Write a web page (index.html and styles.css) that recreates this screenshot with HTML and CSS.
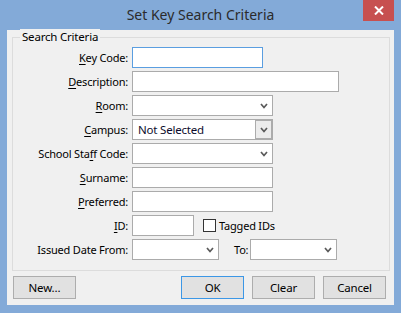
FILE: index.html
```html
<!DOCTYPE html>
<html>
<head>
<meta charset="utf-8">
<link rel="stylesheet" href="styles.css">
</head>
<body>
<div class="window">
  <div class="titlebar">
    <div class="title">Set Key Search Criteria</div>
    <div class="close"><svg width="10" height="9" viewBox="0 0 10 9"><path d="M1 0.5 L9 8.5 M9 0.5 L1 8.5" stroke="#fff" stroke-width="2"/></svg></div>
  </div>
  <div class="client">
    <div class="group">
      <span class="legend">Search Criteria</span>
      <div class="grid">
        <label class="lbl"><u>K</u>ey Code:</label>
        <div class="cell"><div class="box focus w130"></div></div>

        <label class="lbl"><u>D</u>escription:</label>
        <div class="cell"><div class="box w206"></div></div>

        <label class="lbl"><u>R</u>oom:</label>
        <div class="cell"><div class="box combo w140"><span class="val"></span><svg class="chev" width="8" height="6" viewBox="0 0 8 6"><polyline points="1,1 4,4.5 7,1" fill="none" stroke="#5a5a5a" stroke-width="1.7"/></svg></div></div>

        <label class="lbl"><u>C</u>ampus:</label>
        <div class="cell"><div class="box combo w140"><span class="val">Not Selected</span><span class="dropbtn"><svg width="8" height="6" viewBox="0 0 8 6"><polyline points="1,1 4,4.5 7,1" fill="none" stroke="#5a5a5a" stroke-width="1.7"/></svg></span></div></div>

        <label class="lbl">School Sta<u>f</u>f Code:</label>
        <div class="cell"><div class="box combo w140"><span class="val"></span><svg class="chev" width="8" height="6" viewBox="0 0 8 6"><polyline points="1,1 4,4.5 7,1" fill="none" stroke="#5a5a5a" stroke-width="1.7"/></svg></div></div>

        <label class="lbl"><u>S</u>urname:</label>
        <div class="cell"><div class="box w140"></div></div>

        <label class="lbl"><u>P</u>referred:</label>
        <div class="cell"><div class="box w140"></div></div>

        <label class="lbl"><u>I</u>D:</label>
        <div class="cell"><div class="box w62"></div><span class="check"></span><span class="txt">Tagged IDs</span></div>

        <label class="lbl">Issued Date From:</label>
        <div class="cell"><div class="box combo w86"><span class="val"></span><svg class="chev" width="8" height="6" viewBox="0 0 8 6"><polyline points="1,1 4,4.5 7,1" fill="none" stroke="#5a5a5a" stroke-width="1.7"/></svg></div><span class="to">To:</span><div class="box combo w87"><span class="val"></span><svg class="chev" width="8" height="6" viewBox="0 0 8 6"><polyline points="1,1 4,4.5 7,1" fill="none" stroke="#5a5a5a" stroke-width="1.7"/></svg></div></div>
      </div>
    </div>
    <div class="buttons">
      <button class="btn">New…</button>
      <button class="btn default push">OK</button>
      <button class="btn">Clear</button>
      <button class="btn">Cancel</button>
    </div>
  </div>
</div>
</body>
</html>
```
FILE: styles.css
```css
html, body {
  margin: 0;
  padding: 0;
}
body {
  width: 401px;
  height: 313px;
  overflow: hidden;
  background: #83aad8;
  font-family: "Noto Sans", "Open Sans", sans-serif;
  font-size: 11px;
  letter-spacing: -0.2px;
  color: #000;
}
.window {
  width: 401px;
  height: 313px;
  display: flex;
  flex-direction: column;
}
.titlebar {
  height: 30px;
  position: relative;
  flex: none;
}
.title {
  text-align: center;
  font-size: 14px;
  letter-spacing: 0;
  line-height: 30px;
  color: #2b2b2b;
}
.close {
  position: absolute;
  top: 0;
  right: 7px;
  width: 31px;
  height: 21px;
  background: #c75050;
  display: flex;
  align-items: center;
  justify-content: center;
}
.client {
  flex: 1;
  margin: 0 7px 8px 7px;
  background: #f0f0f0;
  display: flex;
  flex-direction: column;
  padding: 7px 0 0 5px;
}
.group {
  position: relative;
  width: 378px;
  height: 234px;
  box-sizing: border-box;
  border: 1px solid #dcdcdc;
}
.legend {
  position: absolute;
  left: 7px;
  top: -9px;
  padding: 0 2px;
  background: #f0f0f0;
  line-height: 16px;
  font-size: 11.5px;
}
.grid {
  display: grid;
  grid-template-columns: 115px auto;
  grid-auto-rows: 21px;
  row-gap: 3px;
  column-gap: 4px;
  padding-top: 9px;
}
.lbl {
  text-align: right;
  line-height: 21px;
  white-space: nowrap;
}
.lbl u {
  text-underline-offset: 2px;
}
.cell {
  display: flex;
  align-items: center;
  height: 21px;
}
.box {
  height: 21px;
  box-sizing: border-box;
  border: 1px solid #ababab;
  background: #fff;
  display: flex;
  align-items: center;
}
.focus {
  border-color: #5a9ee0;
}
.w130 { width: 131px; }
.w206 { width: 207px; }
.w140 { width: 141px; }
.w62 { width: 62px; }
.w86 { width: 87px; }
.w87 { width: 87px; }
.val {
  flex: 1;
  padding-left: 5px;
  line-height: 19px;
  color: #0c0c2c;
  font-size: 11.5px;
}
.chev {
  margin-right: 4px;
}
.dropbtn {
  width: 17px;
  height: 19px;
  box-sizing: border-box;
  border: 1px solid #acacac;
  background: #ececec;
  display: flex;
  align-items: center;
  justify-content: center;
}
.check {
  width: 13px;
  height: 13px;
  box-sizing: border-box;
  border: 1px solid #333;
  background: #fff;
  margin-left: 9px;
}
.txt {
  margin-left: 3px;
}
.to {
  margin-left: 15px;
  margin-right: 2px;
}
.buttons {
  display: flex;
  margin-top: 5px;
  padding-left: 1px;
  padding-right: 8px;
  gap: 8px;
}
.btn {
  width: 63px;
  height: 23px;
  box-sizing: border-box;
  border: 1px solid #adadad;
  background: #e1e1e1;
  font-family: "Noto Sans", "Open Sans", sans-serif;
  font-size: 11.5px;
  letter-spacing: -0.2px;
  color: #000;
  padding: 0;
  border-radius: 0;
}
.default {
  border-color: #3c97e6;
}
.push {
  margin-left: auto;
}
```
